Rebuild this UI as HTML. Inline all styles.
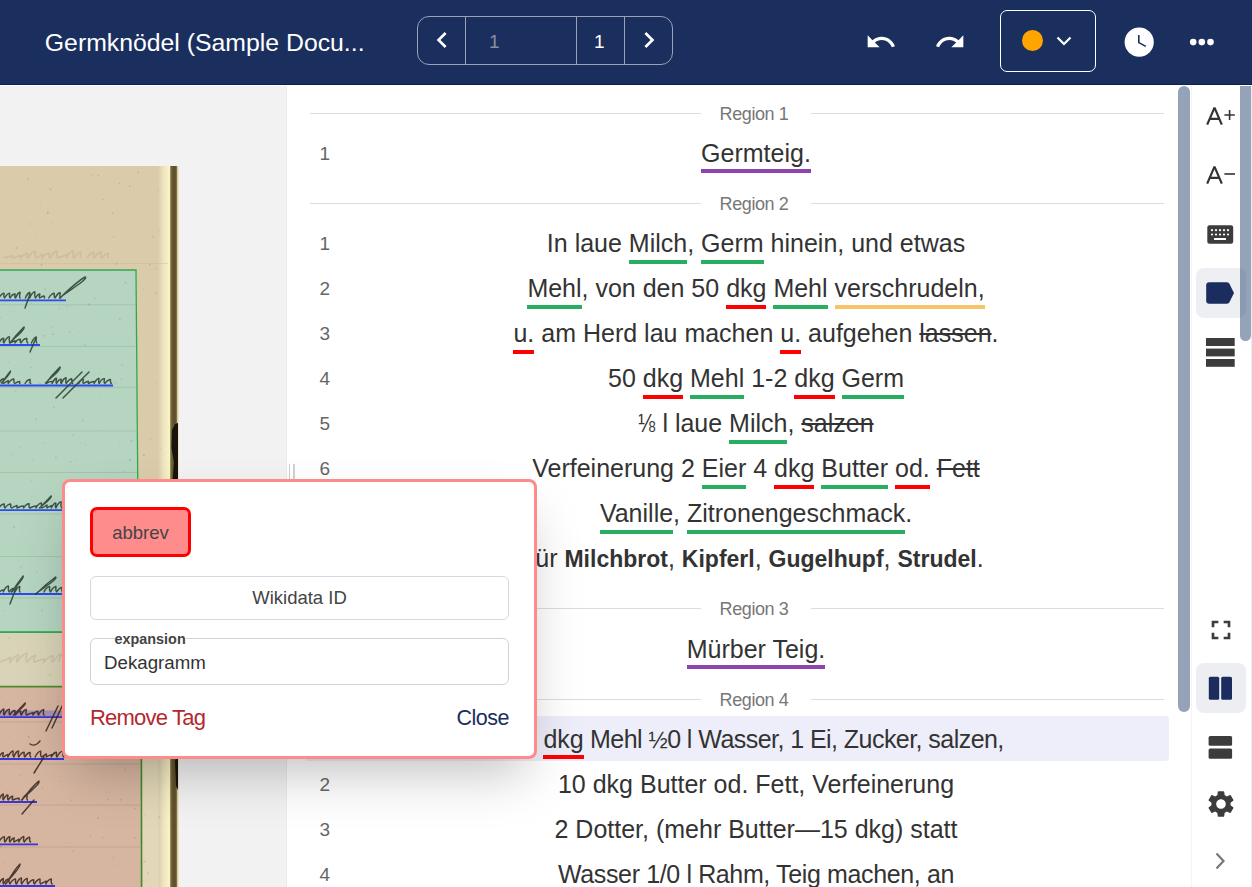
<!DOCTYPE html>
<html><head><meta charset="utf-8">
<style>
*{box-sizing:border-box;margin:0;padding:0}
html,body{width:1252px;height:887px;overflow:hidden;background:#fff;font-family:"Liberation Sans",sans-serif;color:#333}
.abs{position:absolute}
#hdr{left:0;top:0;width:1252px;height:85px;background:#1b2f5f;border-bottom:1px solid #0b2051}
#title{left:44.8px;top:25.6px;font-size:24.8px;color:#fff;white-space:nowrap;line-height:34px}
#pager{left:417px;top:16px;width:256px;height:49px;border:1px solid #9aa2b6;border-radius:12px}
.pdiv{top:0;width:1px;height:47px;background:#9aa2b6}
#imgpane{left:0;top:86px;width:287px;height:801px;background:#f2f2f2;overflow:hidden}
#txtpane{left:287px;top:86px;width:904px;height:801px;background:#fff;overflow:hidden}
.sep{height:1px;background:#dcdcdc}
.rlab{font-size:18px;letter-spacing:-0.4px;color:#777;white-space:nowrap;line-height:20px}
.ln{font-size:19px;color:#666;line-height:20px}
.tl{left:356px;width:800px;text-align:center;font-size:25px;line-height:30px;white-space:nowrap;color:#333}
.u{padding-bottom:6.4px;background-repeat:no-repeat;background-position:left bottom;background-size:100% 4px}
.g{background-image:linear-gradient(#27ae60,#27ae60)}
.r{background-image:linear-gradient(#f00,#f00)}
.y{background-image:linear-gradient(#f7c46c,#f7c46c)}
.p{background-image:linear-gradient(#8e44ad,#8e44ad)}
.s{text-decoration:line-through;text-decoration-thickness:2px}
b{font-weight:700;font-size:23px}
#sidebar{left:1191px;top:86px;width:61px;height:801px;background:#fff;border-left:1px solid #f4f4f4}
#popup{left:62px;top:479px;width:475px;height:280px;background:#fff;border:3px solid #ff8a8a;border-radius:8px;box-shadow:0 25px 50px -12px rgba(0,0,0,.25)}
</style></head><body>
<div id="hdr" class="abs"></div>
<div id="title" class="abs">Germknödel (Sample Docu...</div>
<div id="pager" class="abs">
  <div class="abs pdiv" style="left:47px"></div>
  <div class="abs pdiv" style="left:158px"></div>
  <div class="abs pdiv" style="left:206px"></div>
</div>

<div class="abs" style="left:489px;top:31px;font-size:19px;line-height:22px;color:#8a8f9e">1</div>
<div class="abs" style="left:594px;top:31px;font-size:19px;line-height:22px;color:#fff">1</div>
<svg class="abs" style="left:425.6px;top:24.3px" width="32" height="32" viewBox="0 0 24 24"><path fill="#fff" d="M15.41 7.41L14 6l-6 6 6 6 1.41-1.41L10.83 12z"/></svg>
<svg class="abs" style="left:632.5px;top:24.3px" width="32" height="32" viewBox="0 0 24 24"><path fill="#fff" d="M10 6L8.59 7.41 13.17 12l-4.58 4.59L10 18l6-6z"/></svg>
<svg class="abs" style="left:865.3px;top:26.4px" width="32" height="32" viewBox="0 0 24 24"><path fill="#fff" d="M12.5 8c-2.65 0-5.05.99-6.9 2.6L2 7v9h9l-3.62-3.62c1.39-1.16 3.16-1.88 5.12-1.88 3.54 0 6.55 2.31 7.6 5.5l2.37-.78C21.08 11.03 17.15 8 12.5 8z"/></svg>
<svg class="abs" style="left:934px;top:26.4px" width="32" height="32" viewBox="0 0 24 24"><path fill="#fff" d="M18.4 10.6C16.55 8.99 14.15 8 11.5 8c-4.65 0-8.58 3.03-9.96 7.22L3.9 16c1.050-3.19 4.05-5.5 7.6-5.5 1.95 0 3.73.72 5.12 1.88L13 16h9V7l-3.6 3.6z"/></svg>
<div class="abs" style="left:1000px;top:10px;width:96px;height:62px;border:1px solid #fff;border-radius:7px"></div>
<div class="abs" style="left:1021.8px;top:29.7px;width:21.4px;height:21.4px;border-radius:50%;background:#ffa500"></div>
<svg class="abs" style="left:1055px;top:34px" width="18" height="14" viewBox="0 0 18 14"><path d="M2.5 3.5 L9 10 L15.5 3.5" stroke="#fff" stroke-width="2.2" fill="none"/></svg>
<svg class="abs" style="left:1124px;top:27px" width="30" height="30" viewBox="0 0 30 30"><circle cx="15.2" cy="15.1" r="14.6" fill="#fff"/><path d="M14.8 8 V15.6 L21.8 19.4" stroke="#1b2f5f" stroke-width="1.6" fill="none"/></svg>
<svg class="abs" style="left:1186px;top:35px" width="32" height="14" viewBox="0 0 32 14"><circle cx="7.2" cy="7.1" r="3.3" fill="#fff"/><circle cx="15.8" cy="7.1" r="3.3" fill="#fff"/><circle cx="24.5" cy="7.1" r="3.3" fill="#fff"/></svg>
<div id="imgpane" class="abs"></div>
<svg class="abs" style="left:0;top:86px" width="287" height="801" viewBox="0 86 287 801">
<defs>
<linearGradient id="edge" x1="0" x2="1" y1="0" y2="0">
<stop offset="0" stop-color="#dacbab"/><stop offset="0.5" stop-color="#efe6c0"/><stop offset="1" stop-color="#faf4c8"/>
</linearGradient>
<linearGradient id="bind" x1="0" x2="1" y1="0" y2="0">
<stop offset="0" stop-color="#a89868"/><stop offset="0.22" stop-color="#67592f"/><stop offset="0.6" stop-color="#5a4c2b"/><stop offset="0.76" stop-color="#7d6e45"/><stop offset="0.86" stop-color="#d8c89e"/><stop offset="1" stop-color="#eadab0"/>
</linearGradient>
<linearGradient id="shade" x1="0" x2="1" y1="0" y2="0">
<stop offset="0" stop-color="#000" stop-opacity="0.05"/><stop offset="1" stop-color="#000" stop-opacity="0"/>
</linearGradient>
</defs>
<rect x="-5" y="166" width="170" height="730" fill="#dacbab"/>
<rect x="158" y="166" width="12" height="730" fill="url(#edge)"/>
<rect x="170" y="166" width="8.6" height="730" fill="url(#bind)"/>
<path d="M172 430 L175 424 L178 423 L178 482 L172.5 482 L174 462 L171.5 448 Z" fill="#17130c"/>
<path d="M175 760 L178 758 L178 790 L176 786 Z" fill="#17130c"/>
<g stroke="#c9bb9b" stroke-width="1" opacity="0.45">
<line x1="0" y1="263.5" x2="168" y2="263.5"/>
</g>
<polygon points="-5,270 136,270 139,632 -5,632" fill="#b5d5c1"/>
<polyline points="-5,270 136,270 139,632 -5,632" fill="none" stroke="#2daa50" stroke-width="1.3"/>
<g stroke="#a3c3ad" stroke-width="1">
<line x1="0" y1="304.8" x2="135" y2="304.8"/>
<line x1="0" y1="346.4" x2="136" y2="346.4"/>
<line x1="0" y1="387.3" x2="136" y2="387.3"/>
<line x1="0" y1="431" x2="137" y2="431"/>
<line x1="0" y1="472.5" x2="137" y2="472.5"/>
<line x1="0" y1="514" x2="138" y2="514"/>
<line x1="0" y1="556.6" x2="138" y2="556.6"/>
<line x1="0" y1="598" x2="138" y2="598"/>
</g>
<rect x="-5" y="633" width="145" height="53.5" fill="#d9d3b7"/>
<line x1="-5" y1="632.3" x2="139" y2="632.3" stroke="#2daa50" stroke-width="1.3"/>
<polygon points="-5,687 141,687 141.5,896 -5,896" fill="#d7b6a1"/>
<rect x="141.5" y="687" width="17" height="210" fill="#e2d7b8"/>
<line x1="-5" y1="686.6" x2="141" y2="686.6" stroke="#4b8d2e" stroke-width="1.6"/>
<line x1="141.3" y1="687" x2="141.6" y2="896" stroke="#3f8a2a" stroke-width="1.6"/>
<g stroke="#c4a48f" stroke-width="1">
<line x1="0" y1="722" x2="140" y2="722"/>
<line x1="0" y1="764" x2="140" y2="764"/>
<line x1="0" y1="805" x2="140" y2="805"/>
<line x1="0" y1="847" x2="140" y2="847"/>
</g>
<g fill="#6b5a3a"><circle cx="40.0" cy="558.8" r="0.66" opacity="0.18"/><circle cx="105.1" cy="214.2" r="0.41" opacity="0.22"/><circle cx="43.6" cy="335.7" r="1.10" opacity="0.16"/><circle cx="140.5" cy="510.0" r="0.85" opacity="0.11"/><circle cx="106.7" cy="792.0" r="0.77" opacity="0.21"/><circle cx="112.8" cy="213.1" r="0.93" opacity="0.18"/><circle cx="50.6" cy="189.3" r="1.01" opacity="0.16"/><circle cx="120.8" cy="799.7" r="0.90" opacity="0.24"/><circle cx="66.4" cy="743.7" r="0.71" opacity="0.24"/><circle cx="147.6" cy="237.2" r="0.50" opacity="0.12"/><circle cx="162.2" cy="481.0" r="0.84" opacity="0.13"/><circle cx="85.2" cy="444.8" r="0.65" opacity="0.18"/><circle cx="98.2" cy="818.0" r="0.88" opacity="0.24"/><circle cx="143.9" cy="880.5" r="0.87" opacity="0.11"/><circle cx="144.6" cy="861.5" r="1.03" opacity="0.18"/><circle cx="119.9" cy="319.0" r="0.98" opacity="0.18"/><circle cx="47.9" cy="212.7" r="1.00" opacity="0.25"/><circle cx="14.9" cy="743.4" r="0.69" opacity="0.11"/><circle cx="49.4" cy="720.5" r="1.01" opacity="0.09"/><circle cx="103.2" cy="199.4" r="0.90" opacity="0.14"/><circle cx="148.0" cy="873.1" r="0.75" opacity="0.25"/><circle cx="52.0" cy="222.4" r="0.82" opacity="0.09"/><circle cx="33.2" cy="460.7" r="0.83" opacity="0.11"/><circle cx="7.1" cy="791.8" r="0.62" opacity="0.24"/><circle cx="150.6" cy="439.0" r="0.72" opacity="0.17"/><circle cx="108.2" cy="595.9" r="0.79" opacity="0.19"/><circle cx="158.0" cy="532.1" r="0.70" opacity="0.20"/><circle cx="39.9" cy="383.8" r="1.08" opacity="0.17"/><circle cx="92.1" cy="175.2" r="0.69" opacity="0.18"/><circle cx="3.4" cy="610.4" r="0.84" opacity="0.09"/><circle cx="105.4" cy="502.7" r="0.88" opacity="0.14"/><circle cx="118.8" cy="698.4" r="0.42" opacity="0.09"/><circle cx="113.6" cy="860.6" r="0.58" opacity="0.16"/><circle cx="99.6" cy="397.4" r="0.65" opacity="0.13"/><circle cx="62.0" cy="595.8" r="0.61" opacity="0.14"/><circle cx="129.7" cy="186.4" r="0.80" opacity="0.20"/><circle cx="52.1" cy="327.2" r="0.96" opacity="0.12"/><circle cx="31.5" cy="480.4" r="0.89" opacity="0.10"/><circle cx="54.1" cy="407.3" r="0.98" opacity="0.15"/><circle cx="143.7" cy="288.9" r="0.64" opacity="0.19"/><circle cx="148.7" cy="491.8" r="0.56" opacity="0.10"/><circle cx="89.0" cy="304.4" r="0.96" opacity="0.22"/><circle cx="30.8" cy="367.6" r="0.97" opacity="0.19"/><circle cx="135.5" cy="415.6" r="0.49" opacity="0.13"/><circle cx="133.4" cy="362.2" r="0.64" opacity="0.15"/><circle cx="70.5" cy="461.9" r="1.04" opacity="0.11"/><circle cx="0.8" cy="846.2" r="1.02" opacity="0.25"/><circle cx="73.0" cy="851.1" r="1.05" opacity="0.12"/><circle cx="125.2" cy="769.4" r="0.86" opacity="0.17"/><circle cx="48.6" cy="412.6" r="0.56" opacity="0.09"/><circle cx="98.9" cy="373.6" r="0.97" opacity="0.09"/><circle cx="151.8" cy="666.5" r="1.05" opacity="0.23"/><circle cx="151.1" cy="582.4" r="0.41" opacity="0.21"/><circle cx="28.9" cy="382.9" r="0.86" opacity="0.17"/><circle cx="69.5" cy="843.1" r="0.83" opacity="0.14"/><circle cx="42.4" cy="787.4" r="0.73" opacity="0.21"/><circle cx="59.1" cy="309.1" r="0.77" opacity="0.22"/><circle cx="28.8" cy="737.0" r="1.05" opacity="0.22"/><circle cx="138.3" cy="172.4" r="0.84" opacity="0.23"/><circle cx="8.4" cy="362.4" r="0.59" opacity="0.17"/><circle cx="71.1" cy="507.5" r="0.94" opacity="0.08"/><circle cx="9.2" cy="258.3" r="0.49" opacity="0.09"/><circle cx="163.7" cy="782.2" r="0.46" opacity="0.17"/><circle cx="53.1" cy="393.5" r="0.65" opacity="0.19"/><circle cx="98.6" cy="426.8" r="0.53" opacity="0.14"/><circle cx="20.8" cy="567.0" r="0.90" opacity="0.14"/><circle cx="13.4" cy="295.6" r="0.66" opacity="0.18"/><circle cx="131.5" cy="440.8" r="0.96" opacity="0.19"/><circle cx="72.5" cy="435.1" r="0.75" opacity="0.20"/><circle cx="70.6" cy="666.8" r="0.72" opacity="0.12"/><circle cx="90.0" cy="667.5" r="0.45" opacity="0.15"/><circle cx="71.5" cy="800.4" r="1.06" opacity="0.14"/><circle cx="150.8" cy="736.5" r="0.58" opacity="0.16"/><circle cx="20.7" cy="752.5" r="0.86" opacity="0.23"/><circle cx="133.1" cy="647.6" r="0.91" opacity="0.18"/><circle cx="17.3" cy="590.2" r="0.40" opacity="0.10"/><circle cx="130.1" cy="198.9" r="0.46" opacity="0.10"/><circle cx="147.9" cy="296.0" r="0.42" opacity="0.22"/><circle cx="20.4" cy="774.6" r="0.87" opacity="0.22"/><circle cx="160.0" cy="583.9" r="0.96" opacity="0.09"/><circle cx="128.9" cy="535.2" r="0.90" opacity="0.10"/><circle cx="125.8" cy="839.9" r="0.44" opacity="0.14"/><circle cx="94.7" cy="763.2" r="0.57" opacity="0.11"/><circle cx="42.0" cy="610.5" r="0.93" opacity="0.15"/><circle cx="61.7" cy="452.6" r="0.65" opacity="0.15"/><circle cx="14.0" cy="527.2" r="1.08" opacity="0.15"/><circle cx="125.6" cy="282.6" r="0.88" opacity="0.21"/><circle cx="113.2" cy="539.3" r="0.74" opacity="0.19"/><circle cx="150.8" cy="274.5" r="0.47" opacity="0.21"/><circle cx="154.0" cy="539.4" r="0.71" opacity="0.20"/><circle cx="31.3" cy="359.5" r="0.54" opacity="0.18"/><circle cx="52.9" cy="334.3" r="0.88" opacity="0.24"/><circle cx="49.7" cy="674.8" r="0.69" opacity="0.23"/><circle cx="98.2" cy="359.4" r="0.55" opacity="0.08"/><circle cx="80.6" cy="442.6" r="0.52" opacity="0.14"/><circle cx="54.1" cy="724.4" r="0.50" opacity="0.25"/><circle cx="80.6" cy="598.3" r="0.73" opacity="0.22"/><circle cx="138.0" cy="568.1" r="0.74" opacity="0.20"/><circle cx="143.9" cy="455.2" r="0.91" opacity="0.24"/><circle cx="78.5" cy="332.3" r="0.56" opacity="0.20"/><circle cx="113.5" cy="857.3" r="1.00" opacity="0.12"/><circle cx="31.9" cy="353.2" r="0.53" opacity="0.20"/><circle cx="144.2" cy="814.8" r="0.58" opacity="0.23"/><circle cx="52.7" cy="471.8" r="0.91" opacity="0.09"/><circle cx="15.6" cy="767.4" r="0.60" opacity="0.14"/><circle cx="97.5" cy="653.4" r="0.40" opacity="0.14"/><circle cx="73.3" cy="516.8" r="0.55" opacity="0.18"/><circle cx="160.5" cy="448.5" r="0.78" opacity="0.10"/><circle cx="46.2" cy="646.1" r="0.48" opacity="0.23"/><circle cx="152.7" cy="236.8" r="1.06" opacity="0.14"/><circle cx="129.8" cy="712.3" r="0.61" opacity="0.19"/><circle cx="109.9" cy="747.4" r="0.59" opacity="0.21"/><circle cx="161.5" cy="651.4" r="0.78" opacity="0.10"/><circle cx="83.0" cy="420.6" r="0.90" opacity="0.20"/><circle cx="95.2" cy="298.0" r="0.85" opacity="0.19"/><circle cx="30.1" cy="807.7" r="0.86" opacity="0.10"/><circle cx="156.5" cy="268.8" r="0.63" opacity="0.20"/><circle cx="100.4" cy="566.5" r="0.85" opacity="0.16"/><circle cx="52.5" cy="294.0" r="0.45" opacity="0.20"/><circle cx="126.8" cy="558.1" r="0.92" opacity="0.14"/><circle cx="44.7" cy="443.0" r="1.01" opacity="0.09"/><circle cx="84.8" cy="345.0" r="0.94" opacity="0.14"/><circle cx="55.9" cy="457.4" r="0.78" opacity="0.21"/><circle cx="59.3" cy="776.8" r="0.48" opacity="0.13"/><circle cx="16.7" cy="248.1" r="0.95" opacity="0.20"/><circle cx="31.1" cy="303.2" r="0.69" opacity="0.21"/><circle cx="137.0" cy="706.1" r="0.81" opacity="0.10"/><circle cx="66.9" cy="306.4" r="0.77" opacity="0.18"/><circle cx="33.9" cy="347.1" r="0.95" opacity="0.09"/><circle cx="134.9" cy="808.7" r="1.06" opacity="0.15"/><circle cx="92.8" cy="586.8" r="0.84" opacity="0.25"/><circle cx="115.4" cy="382.6" r="1.00" opacity="0.16"/><circle cx="101.0" cy="690.3" r="0.40" opacity="0.21"/><circle cx="111.2" cy="521.1" r="0.77" opacity="0.16"/><circle cx="32.5" cy="548.3" r="0.43" opacity="0.17"/><circle cx="108.5" cy="486.8" r="0.80" opacity="0.24"/><circle cx="149.9" cy="264.6" r="0.95" opacity="0.19"/><circle cx="8.5" cy="426.1" r="0.56" opacity="0.09"/><circle cx="90.5" cy="836.5" r="0.63" opacity="0.23"/><circle cx="116.7" cy="263.7" r="1.00" opacity="0.18"/><circle cx="155.7" cy="682.5" r="0.92" opacity="0.14"/><circle cx="135.5" cy="837.9" r="1.00" opacity="0.15"/><circle cx="127.2" cy="516.2" r="0.48" opacity="0.09"/><circle cx="13.1" cy="311.2" r="0.51" opacity="0.16"/><circle cx="117.5" cy="554.0" r="0.70" opacity="0.19"/><circle cx="51.2" cy="501.4" r="0.93" opacity="0.15"/><circle cx="30.3" cy="814.6" r="0.90" opacity="0.14"/><circle cx="62.3" cy="548.1" r="0.82" opacity="0.12"/><circle cx="0.5" cy="317.5" r="0.95" opacity="0.10"/><circle cx="77.3" cy="307.6" r="0.55" opacity="0.11"/><circle cx="67.8" cy="288.2" r="0.42" opacity="0.10"/><circle cx="28.3" cy="520.0" r="0.44" opacity="0.08"/><circle cx="75.3" cy="460.6" r="0.89" opacity="0.09"/><circle cx="67.8" cy="452.6" r="0.42" opacity="0.24"/><circle cx="36.8" cy="234.9" r="0.73" opacity="0.11"/><circle cx="104.6" cy="416.4" r="0.49" opacity="0.09"/><circle cx="122.2" cy="365.1" r="0.95" opacity="0.16"/><circle cx="156.7" cy="383.4" r="0.57" opacity="0.13"/><circle cx="136.9" cy="620.0" r="0.64" opacity="0.10"/><circle cx="114.6" cy="864.9" r="0.81" opacity="0.08"/><circle cx="5.1" cy="232.2" r="0.52" opacity="0.09"/><circle cx="9.1" cy="638.1" r="1.03" opacity="0.11"/><circle cx="163.6" cy="510.4" r="0.96" opacity="0.24"/><circle cx="157.9" cy="191.6" r="0.61" opacity="0.18"/><circle cx="159.0" cy="230.2" r="0.61" opacity="0.22"/><circle cx="19.3" cy="447.7" r="0.63" opacity="0.20"/><circle cx="156.0" cy="292.7" r="0.92" opacity="0.20"/><circle cx="140.4" cy="565.4" r="1.05" opacity="0.14"/><circle cx="69.7" cy="332.2" r="0.95" opacity="0.16"/><circle cx="45.3" cy="289.2" r="0.90" opacity="0.18"/><circle cx="119.4" cy="445.5" r="0.74" opacity="0.11"/><circle cx="119.4" cy="183.5" r="0.73" opacity="0.21"/><circle cx="113.8" cy="236.9" r="0.57" opacity="0.22"/><circle cx="107.9" cy="799.5" r="1.01" opacity="0.16"/><circle cx="150.7" cy="694.7" r="0.63" opacity="0.14"/><circle cx="12.1" cy="454.5" r="1.07" opacity="0.10"/><circle cx="95.6" cy="246.3" r="0.46" opacity="0.19"/><circle cx="40.4" cy="202.2" r="0.51" opacity="0.19"/><circle cx="98.4" cy="175.4" r="0.56" opacity="0.24"/><circle cx="37.0" cy="572.0" r="0.69" opacity="0.21"/><circle cx="101.5" cy="734.8" r="0.77" opacity="0.11"/><circle cx="29.8" cy="224.0" r="0.98" opacity="0.10"/><circle cx="4.0" cy="862.8" r="0.54" opacity="0.23"/><circle cx="14.4" cy="502.0" r="0.56" opacity="0.22"/><circle cx="103.4" cy="629.1" r="0.93" opacity="0.23"/><circle cx="58.1" cy="601.2" r="0.71" opacity="0.10"/><circle cx="140.3" cy="595.0" r="0.97" opacity="0.12"/><circle cx="90.6" cy="501.2" r="0.91" opacity="0.09"/><circle cx="58.2" cy="515.9" r="0.45" opacity="0.17"/><circle cx="123.5" cy="471.5" r="0.85" opacity="0.18"/><circle cx="36.0" cy="419.4" r="1.10" opacity="0.14"/><circle cx="72.4" cy="227.6" r="0.55" opacity="0.11"/><circle cx="156.4" cy="690.0" r="1.01" opacity="0.25"/><circle cx="102.8" cy="837.6" r="0.78" opacity="0.15"/><circle cx="159.3" cy="817.2" r="1.06" opacity="0.16"/><circle cx="129.9" cy="460.0" r="1.10" opacity="0.24"/><circle cx="49.1" cy="839.6" r="0.53" opacity="0.10"/><circle cx="121.4" cy="378.9" r="0.76" opacity="0.19"/><circle cx="6.8" cy="703.5" r="0.59" opacity="0.15"/><circle cx="57.9" cy="701.3" r="0.92" opacity="0.13"/><circle cx="17.4" cy="382.5" r="0.69" opacity="0.09"/><circle cx="25.7" cy="716.2" r="0.89" opacity="0.25"/><circle cx="164.6" cy="797.8" r="0.66" opacity="0.11"/><circle cx="52.4" cy="500.5" r="0.77" opacity="0.17"/><circle cx="60.4" cy="780.9" r="0.60" opacity="0.16"/><circle cx="149.0" cy="748.1" r="0.61" opacity="0.12"/><circle cx="135.5" cy="174.2" r="0.49" opacity="0.17"/><circle cx="90.0" cy="286.3" r="0.44" opacity="0.11"/><circle cx="129.4" cy="502.3" r="1.09" opacity="0.21"/><circle cx="164.5" cy="192.3" r="0.53" opacity="0.08"/><circle cx="72.6" cy="410.6" r="0.44" opacity="0.17"/><circle cx="15.8" cy="391.4" r="0.57" opacity="0.22"/><circle cx="70.3" cy="354.5" r="0.43" opacity="0.15"/><circle cx="105.4" cy="653.2" r="1.04" opacity="0.22"/><circle cx="41.6" cy="264.7" r="0.93" opacity="0.21"/><circle cx="85.5" cy="765.3" r="0.79" opacity="0.13"/><circle cx="28.3" cy="179.3" r="0.85" opacity="0.23"/><circle cx="152.2" cy="503.6" r="0.87" opacity="0.24"/><circle cx="136.8" cy="600.9" r="0.69" opacity="0.17"/><circle cx="28.7" cy="298.7" r="0.88" opacity="0.25"/></g>
<rect x="-5" y="710.5" width="146" height="6.5" fill="#9b86b8" opacity="0.75"/>
<g stroke="#2b4cf0" stroke-width="1.8">
<line x1="-2" y1="300.4" x2="66" y2="300.4"/>
<line x1="-2" y1="345" x2="40" y2="345"/>
<line x1="-2" y1="385.5" x2="113" y2="385.5"/>
<line x1="-2" y1="510.1" x2="64" y2="510.1"/>
<line x1="-2" y1="594" x2="64" y2="594"/>
</g>
<g stroke="#3a36d8" stroke-width="1.8">
<line x1="-2" y1="717.2" x2="64" y2="717.2"/>
<line x1="-2" y1="759" x2="64" y2="759"/>
<line x1="-2" y1="802" x2="37" y2="802"/>
<line x1="-2" y1="844.4" x2="38" y2="844.4"/>
<line x1="-2" y1="886" x2="55" y2="886"/>
</g>
<g stroke="#2a3d32" stroke-width="1.45" fill="none" stroke-linecap="round" stroke-linejoin="round" opacity="0.85">
<path d="M-1.0 298.0 C0.3 295.1 2.9 293.2 4.0 293.2 C4.6 293.7 2.9 297.0 4.6 298.0 C5.9 295.1 8.5 293.1 9.6 293.1 C10.1 293.6 8.5 297.0 10.1 298.0 C11.4 295.5 13.9 293.9 15.0 293.9 C15.6 294.3 13.9 297.2 15.6 298.0 C16.9 294.6 19.1 292.3 20.0 292.3 C20.4 292.8 18.7 296.9 20.0 298.0 M25.4 298.0 C26.7 294.7 28.9 292.5 29.8 292.5 C30.2 293.1 28.4 296.9 29.7 298.0 C31.0 294.3 33.6 291.8 34.8 291.8 C35.4 292.4 33.8 296.8 35.5 298.0 C36.9 295.6 39.0 294.0 39.8 294.0 C40.3 294.4 38.5 297.2 39.7 298.0 C41.1 297.0 43.0 296.0 44.4 296.1 L44.4 298.0 M48.8 298.0 C50.1 295.1 52.9 293.2 54.2 293.2 C54.8 293.7 53.2 297.0 55.1 298.0 C56.5 294.8 59.0 292.7 60.1 292.7 C60.6 293.2 59.0 296.9 60.6 298.0 M60.0 298.0 C70.8 287.5 81.6 279.0 85.2 277.0 C88.8 279.0 67.2 291.7 59.5 298.0 M30.0 294.0 L25.0 308.0"/>
<path d="M-1.0 343.0 C0.3 340.1 2.7 338.2 3.6 338.2 C4.1 338.6 2.4 342.0 3.9 343.0 C5.2 339.2 8.0 336.7 9.3 336.7 C9.9 337.3 8.3 341.7 10.2 343.0 C11.7 342.0 13.6 341.0 15.0 340.8 L15.0 343.0 C16.3 340.7 19.0 339.2 20.3 339.2 C20.9 339.6 19.3 342.2 21.1 343.0 C22.5 340.2 25.3 338.4 26.7 338.4 C27.3 338.8 25.8 342.1 27.8 343.0 M31.4 343.0 C32.7 339.4 35.2 336.9 36.3 336.9 C36.8 337.5 35.2 341.8 36.8 343.0 M10.0 343.0 C16.0 335.0 22.0 329.0 24.0 327.0 C26.0 329.0 14.0 338.2 9.5 343.0 M36.0 338.0 L30.0 352.0"/>
<path d="M-1.0 383.5 C0.3 380.7 2.5 378.8 3.4 378.8 C3.8 379.3 2.0 382.6 3.3 383.5 C4.8 382.5 6.8 381.5 8.2 380.6 L8.2 383.5 C9.5 380.8 12.4 379.0 13.7 379.0 C14.4 379.5 12.9 382.6 14.9 383.5 C16.3 382.5 18.2 381.5 19.7 381.5 L19.7 383.5 M25.1 383.5 C26.4 381.1 29.0 379.4 30.1 379.4 C30.6 379.8 29.0 382.7 30.7 383.5 M2.0 383.0 C5.6 377.0 9.2 373.0 10.4 371.0 C11.6 373.0 4.4 379.4 1.5 383.0M46.0 383.5 C47.8 382.5 50.2 381.5 52.1 381.4 L52.1 383.5 C53.4 380.3 55.6 378.2 56.5 378.2 C56.9 378.7 55.2 382.4 56.5 383.5 C57.8 381.0 60.2 379.3 61.2 379.3 C61.6 379.7 59.9 382.7 61.4 383.5 C62.7 380.0 65.1 377.7 66.1 377.7 C66.6 378.3 64.9 382.3 66.3 383.5 C67.7 380.7 70.5 378.8 71.7 378.8 C72.4 379.3 70.8 382.6 72.7 383.5 M78.7 383.5 C80.0 381.0 82.3 379.3 83.3 379.3 C83.8 379.7 82.1 382.7 83.5 383.5 C85.0 382.5 87.0 381.5 88.4 381.3 L88.4 383.5 C90.2 382.5 92.4 381.5 94.1 381.6 L94.1 383.5 C95.4 380.4 97.9 378.3 98.9 378.3 C99.4 378.8 97.7 382.5 99.3 383.5 C100.6 380.6 103.1 378.6 104.3 378.6 C104.8 379.1 103.2 382.5 104.9 383.5 C106.2 381.1 109.1 379.5 110.4 379.5 C111.0 379.9 109.5 382.7 111.4 383.5 M46.0 383.0 C52.0 375.0 58.0 369.0 60.0 367.0 C62.0 369.0 50.0 378.2 45.5 383.0 M82.0 372.0 L56.0 398.0 M89.0 372.0 L63.0 398.0"/>
<path d="M-1.0 508.0 C0.3 505.5 3.0 503.9 4.2 503.9 C4.8 504.3 3.3 507.2 5.1 508.0 C6.4 505.5 9.3 503.9 10.6 503.9 C11.3 504.3 9.7 507.2 11.7 508.0 C13.3 507.0 15.4 506.0 17.0 505.4 L17.0 508.0 C19.0 507.0 21.6 506.0 23.6 506.1 L23.6 508.0 C25.0 505.4 27.7 503.7 29.0 503.7 C29.6 504.1 28.0 507.1 29.9 508.0 C31.7 507.0 34.2 506.0 36.0 506.0 L36.0 508.0 C37.3 504.9 40.1 502.9 41.4 502.9 C42.0 503.4 40.4 507.0 42.3 508.0 C43.7 507.0 45.6 506.0 47.0 505.0 L47.0 508.0 C48.3 507.0 50.1 506.0 51.3 505.6 L51.3 508.0 C52.7 504.9 54.9 502.9 55.8 502.9 C56.3 503.4 54.5 507.0 55.9 508.0 C57.2 504.3 59.8 501.8 61.0 501.8 C61.6 502.4 60.0 506.8 61.7 508.0 M40.0 508.0 C44.8 502.0 49.6 498.0 51.2 496.0 C52.8 498.0 43.2 504.4 39.5 508.0"/>
<path d="M-1.0 592.0 C0.3 591.0 2.0 590.0 3.3 590.0 L3.3 592.0 C4.6 588.4 7.2 585.9 8.4 585.9 C9.0 586.5 7.4 590.8 9.2 592.0 C10.6 589.8 13.2 588.3 14.3 588.3 C14.9 588.7 13.3 591.3 15.0 592.0 C16.4 588.7 18.7 586.4 19.7 586.4 C20.2 587.0 18.5 590.9 20.0 592.0 M24.7 592.0 M12.0 592.0 C16.8 584.0 21.6 578.0 23.2 576.0 C24.8 578.0 15.2 587.2 11.5 592.0 M16.0 588.0 L10.0 604.0 M36.0 594.0 C44.4 585.5 52.8 579.0 55.6 577.0 C58.4 579.0 41.6 588.9 35.5 594.0M44.0 592.0 C45.3 588.6 48.2 586.4 49.5 586.4 C50.1 587.0 48.6 590.9 50.5 592.0 C51.8 588.7 54.6 586.5 55.8 586.5 C56.4 587.1 54.9 590.9 56.7 592.0 C58.0 589.3 60.7 587.5 61.9 587.5 C62.5 587.9 60.9 591.1 62.7 592.0"/>
</g>
<g stroke="#35251d" stroke-width="1.45" fill="none" stroke-linecap="round" stroke-linejoin="round" opacity="0.85">
<path d="M-1.0 715.0 C0.3 711.4 2.8 709.0 3.8 709.0 C4.3 709.6 2.7 713.8 4.2 715.0 C5.6 711.4 8.1 709.1 9.3 709.1 C9.8 709.7 8.2 713.8 9.9 715.0 C11.2 712.2 13.8 710.4 14.9 710.4 C15.5 710.8 13.9 714.1 15.6 715.0 C16.9 712.7 19.5 711.2 20.7 711.2 C21.3 711.6 19.6 714.2 21.4 715.0 C22.7 711.7 25.1 709.4 26.2 709.4 C26.7 710.0 25.0 713.9 26.6 715.0 C28.5 714.0 31.0 713.0 32.9 712.6 L32.9 715.0 C34.2 712.8 36.8 711.3 38.0 711.3 C38.5 711.7 36.9 714.3 38.6 715.0 C39.9 711.7 42.5 709.5 43.6 709.5 C44.1 710.1 42.4 713.9 44.1 715.0 M14.0 715.0 C18.8 709.0 23.6 705.0 25.2 703.0 C26.8 705.0 17.2 711.4 13.5 715.0 M58.0 706.0 L46.0 731.0 M64.0 702.0 L52.0 728.0"/>
<path d="M-1.0 757.0 C0.3 754.4 2.5 752.7 3.3 752.7 C3.7 753.1 1.9 756.1 3.2 757.0 C4.6 756.0 6.5 755.0 7.9 754.3 L7.9 757.0 C9.2 753.4 11.8 751.0 13.0 751.0 C13.6 751.6 12.0 755.8 13.8 757.0 C15.1 753.4 17.5 751.0 18.5 751.0 C19.0 751.6 17.3 755.8 18.8 757.0 C20.1 754.1 22.8 752.2 24.1 752.2 C24.7 752.7 23.1 756.0 25.0 757.0 C26.3 754.2 28.9 752.4 30.1 752.4 C30.6 752.8 29.0 756.1 30.7 757.0 M35.2 757.0 C36.5 753.5 39.3 751.1 40.6 751.1 C41.2 751.7 39.6 755.8 41.5 757.0 C43.0 756.0 45.0 755.0 46.4 753.9 L46.4 757.0 C47.9 756.0 49.8 755.0 51.3 754.6 L51.3 757.0 C52.6 754.2 55.2 752.3 56.4 752.3 C57.0 752.8 55.4 756.1 57.1 757.0 C58.4 753.5 61.3 751.1 62.6 751.1 C63.3 751.7 61.8 755.8 63.8 757.0 M66.9 757.0 M30 744 C33 746 37 745 40 741 M44.0 757.0 L34.0 773.0"/>
<path d="M-1.0 800.0 C0.3 796.4 2.5 794.0 3.3 794.0 C3.8 794.6 2.0 798.8 3.3 800.0 C4.6 796.9 7.0 794.9 7.9 794.9 C8.4 795.4 6.7 799.0 8.2 800.0 C9.6 797.8 11.8 796.3 12.7 796.3 C13.1 796.7 11.4 799.3 12.7 800.0 C14.6 799.0 17.2 798.0 19.1 798.2 L19.1 800.0 M22.2 800.0 C23.5 796.8 26.0 794.7 27.1 794.7 C27.6 795.2 25.9 798.9 27.5 800.0 M22.0 800.0 C29.2 790.5 36.4 783.0 38.8 781.0 C41.2 783.0 26.8 794.3 21.5 800.0 M34.0 800.0 L22.0 814.0"/>
<path d="M-1.0 842.0 C0.3 838.8 3.1 836.6 4.3 836.6 C5.0 837.2 3.4 840.9 5.3 842.0 C6.6 838.7 8.9 836.6 9.8 836.6 C10.3 837.1 8.5 840.9 9.9 842.0 C11.3 839.6 13.4 837.9 14.2 837.9 C14.7 838.3 12.9 841.2 14.1 842.0 C15.5 841.0 17.4 840.0 18.8 839.2 L18.8 842.0 C20.1 838.7 22.6 836.5 23.7 836.5 C24.3 837.1 22.6 840.9 24.3 842.0 C25.6 839.2 28.3 837.3 29.6 837.3 C30.2 837.8 28.6 841.1 30.5 842.0 M36.3 842.0"/>
<path d="M-1.0 884.0 C0.3 880.7 2.5 878.4 3.4 878.4 C3.9 879.0 2.1 882.9 3.5 884.0 C4.8 880.8 7.7 878.7 9.0 878.7 C9.6 879.2 8.1 882.9 10.0 884.0 C11.3 880.9 14.2 878.9 15.4 878.9 C16.1 879.4 14.5 883.0 16.5 884.0 C17.8 880.3 20.3 877.9 21.4 877.9 C21.9 878.5 20.2 882.8 21.8 884.0 C23.2 880.7 25.9 878.5 27.2 878.5 C27.8 879.0 26.2 882.9 28.1 884.0 C29.4 881.5 32.3 879.8 33.6 879.8 C34.2 880.2 32.7 883.2 34.6 884.0 C35.9 881.0 38.7 879.0 39.9 879.0 C40.6 879.5 39.0 883.0 40.8 884.0 C42.4 883.0 44.4 882.0 45.9 881.0 L45.9 884.0 C47.2 880.9 50.0 878.9 51.2 878.9 C51.8 879.4 50.2 883.0 52.1 884.0 M57.5 884.0 M6.0 884.0 C12.0 874.0 18.0 866.0 20.0 864.0 C22.0 866.0 10.0 878.0 5.5 884.0"/>
</g>
<g stroke="#b3a88e" stroke-width="1.5" fill="none" opacity="0.4"><path d="M4.0 258.0 C6.5 257.0 9.9 256.0 12.4 255.8 L12.4 258.0 C14.9 257.0 18.2 256.0 20.8 255.4 L20.8 258.0 C22.6 255.2 26.0 253.3 27.5 253.3 C28.2 253.8 25.9 257.1 28.2 258.0 C30.0 253.9 33.6 251.2 35.2 251.2 C36.0 251.8 33.8 256.6 36.2 258.0 C37.9 257.0 40.3 256.0 42.1 254.4 L42.1 258.0 C43.9 254.9 47.5 252.9 49.2 252.9 C50.0 253.4 47.8 257.0 50.2 258.0 C52.0 253.9 55.5 251.1 57.0 251.1 C57.8 251.8 55.5 256.6 57.8 258.0 C60.4 257.0 63.9 256.0 66.5 254.6 L66.5 258.0 C68.3 253.6 71.8 250.7 73.3 250.7 C74.0 251.5 71.7 256.5 74.0 258.0 C75.8 254.5 79.2 252.1 80.7 252.1 C81.4 252.7 79.1 256.8 81.3 258.0 M87.2 258.0 C89.0 254.5 92.3 252.2 93.7 252.2 C94.4 252.8 92.1 256.8 94.2 258.0 C96.0 254.4 99.4 252.0 100.9 252.0 C101.6 252.6 99.4 256.8 101.6 258.0 C103.4 255.4 106.8 253.6 108.3 253.6 C109.1 254.0 106.8 257.1 109.1 258.0"/><path d="M0.0 662.0 C3.0 661.0 7.1 660.0 10.1 657.4 L10.1 662.0 C13.1 657.6 17.2 654.7 18.5 654.7 C19.2 655.4 14.9 660.5 17.0 662.0 C20.0 656.8 25.0 653.3 27.0 653.3 C28.0 654.2 24.0 660.3 27.0 662.0 C30.0 658.0 34.2 655.3 35.6 655.3 C36.3 656.0 32.0 660.7 34.2 662.0 C37.0 661.0 40.8 660.0 43.7 659.0 L43.7 662.0 C46.7 658.2 51.4 655.7 53.3 655.7 C54.2 656.3 50.1 660.7 52.8 662.0 C55.8 657.3 59.9 654.1 61.2 654.1 C61.9 654.9 57.6 660.4 59.7 662.0 M64.2 662.0 C67.2 658.2 71.3 655.6 72.8 655.6 C73.5 656.2 69.2 660.7 71.4 662.0 C74.4 657.7 78.7 654.8 80.3 654.8 C81.1 655.5 76.9 660.6 79.3 662.0 C81.4 661.0 84.2 660.0 86.3 658.2 L86.3 662.0 C89.3 657.2 94.0 654.0 95.8 654.0 C96.7 654.8 92.6 660.4 95.3 662.0 C98.2 661.0 102.2 660.0 105.1 658.1 L105.1 662.0 C108.1 656.8 113.1 653.3 115.1 653.3 C116.1 654.2 112.1 660.3 115.1 662.0 C118.1 656.5 122.3 652.9 123.7 652.9 C124.5 653.8 120.2 660.2 122.4 662.0 C125.4 658.4 129.6 656.1 131.1 656.1 C131.8 656.7 127.5 660.8 129.7 662.0 C132.7 658.5 137.7 656.2 139.6 656.2 C140.6 656.8 136.6 660.8 139.5 662.0"/></g>
</svg>

<div id="txtpane" class="abs"></div>
<div class="abs" style="left:286px;top:86px;width:1px;height:801px;background:#ebebeb"></div>
<div class="abs" style="left:288.5px;top:464px;width:1.5px;height:15px;background:#d0d0d0"></div><div class="abs" style="left:293px;top:464px;width:1.5px;height:15px;background:#d0d0d0"></div>
<div class="abs sep" style="left:310px;top:112.5px;width:391px"></div>
<div class="abs sep" style="left:811px;top:112.5px;width:353px"></div>
<div class="abs rlab" style="left:699px;width:110px;text-align:center;top:103.56px">Region 1</div>
<div class="abs ln" style="left:319.5px;top:143.92px">1</div>
<div class="abs tl" style="top:137.84px"><span class="u p">Germteig.</span></div>
<div class="abs sep" style="left:310px;top:202.5px;width:391px"></div>
<div class="abs sep" style="left:811px;top:202.5px;width:353px"></div>
<div class="abs rlab" style="left:699px;width:110px;text-align:center;top:193.56px">Region 2</div>
<div class="abs ln" style="left:319.5px;top:234.42px">1</div>
<div class="abs tl" style="top:228.34px">In laue <span class="u g">Milch</span>, <span class="u g">Germ</span> hinein, und etwas</div>
<div class="abs ln" style="left:319.5px;top:279.42px">2</div>
<div class="abs tl" style="top:273.34px"><span class="u g">Mehl</span>, von den 50 <span class="u r">dkg</span> <span class="u g">Mehl</span> <span class="u y">verschrudeln,</span></div>
<div class="abs ln" style="left:319.5px;top:324.42px">3</div>
<div class="abs tl" style="top:318.34px"><span class="u r">u.</span> am Herd lau machen <span class="u r">u.</span> aufgehen <span class="s">lassen</span>.</div>
<div class="abs ln" style="left:319.5px;top:369.42px">4</div>
<div class="abs tl" style="top:363.34px">50 <span class="u r">dkg</span> <span class="u g">Mehl</span> 1-2 <span class="u r">dkg</span> <span class="u g">Germ</span></div>
<div class="abs ln" style="left:319.5px;top:414.42px">5</div>
<div class="abs tl" style="top:408.34px"><span style="display:inline-block;transform:scaleX(0.82);margin:0 -1.9px">⅛</span> l laue <span class="u g">Milch</span>, <span class="s">salzen</span></div>
<div class="abs ln" style="left:319.5px;top:459.42px">6</div>
<div class="abs tl" style="top:453.34px">Verfeinerung 2 <span class="u g">Eier</span> 4 <span class="u r">dkg</span> <span class="u g">Butter</span> <span class="u r">od.</span> <span class="s">Fett</span></div>
<div class="abs ln" style="left:319.5px;top:504.42px">7</div>
<div class="abs tl" style="top:498.34px"><span class="u g">Vanille</span>, <span class="u g">Zitronengeschmack</span>.</div>
<div class="abs ln" style="left:319.5px;top:549.42px">8</div>
<div class="abs tl" style="top:543.34px">für <b>Milchbrot</b>, <b>Kipferl</b>, <b>Gugelhupf</b>, <b>Strudel</b>.</div>
<div class="abs sep" style="left:310px;top:607.9px;width:391px"></div>
<div class="abs sep" style="left:811px;top:607.9px;width:353px"></div>
<div class="abs rlab" style="left:699px;width:110px;text-align:center;top:598.96px">Region 3</div>
<div class="abs ln" style="left:319.5px;top:639.62px">1</div>
<div class="abs tl" style="top:633.54px"><span class="u p">Mürber Teig.</span></div>
<div class="abs sep" style="left:310px;top:698.8px;width:391px"></div>
<div class="abs sep" style="left:811px;top:698.8px;width:353px"></div>
<div class="abs rlab" style="left:699px;width:110px;text-align:center;top:689.86px">Region 4</div>
<div class="abs" style="left:305px;top:716px;width:864px;height:45px;background:#eeeefa;border-radius:4px"></div>
<div class="abs ln" style="left:319.5px;top:729.92px">1</div>
<div class="abs tl" style="top:723.84px;left:543.4px;width:auto;text-align:left;letter-spacing:-0.55px"><span class="u r" style="letter-spacing:0">dkg</span> Mehl <span style="font-size:23px">½</span>0 l Wasser, 1 Ei, Zucker, salzen,</div>
<div class="abs ln" style="left:319.5px;top:774.92px">2</div>
<div class="abs tl" style="top:768.84px">10 dkg Butter od. Fett, Verfeinerung</div>
<div class="abs ln" style="left:319.5px;top:819.92px">3</div>
<div class="abs tl" style="top:813.84px">2 Dotter, (mehr Butter—15 dkg) statt</div>
<div class="abs ln" style="left:319.5px;top:864.92px">4</div>
<div class="abs tl" style="top:858.84px;letter-spacing:-0.37px">Wasser 1/0 l Rahm, Teig machen, an</div>
<div id="sidebar" class="abs"></div>
<div class="abs" style="left:1178px;top:86px;width:12px;height:626px;background:#94a3b8;border-radius:6px"></div>
<div class="abs" style="left:1240px;top:86px;width:10.7px;height:255px;background:#94a3b8;border-radius:0 0 5.5px 5.5px"></div>
<div class="abs" style="left:1250.8px;top:86px;width:1.2px;height:801px;background:#ececec"></div>
<svg class="abs" style="left:1204px;top:104px" width="34" height="24" viewBox="0 0 34 24"><path d="M3.2 20.6 L10.5 3.6 L17.8 20.6 M5.6 14.9 H15.4" stroke="#333" stroke-width="2.2" fill="none" stroke-linejoin="bevel"/><path d="M20.4 11 H30.8 M25.6 5.9 V16.1" stroke="#333" stroke-width="1.6" fill="none"/></svg>
<svg class="abs" style="left:1204px;top:163px" width="34" height="24" viewBox="0 0 34 24"><path d="M3.2 20.6 L10.5 3.6 L17.8 20.6 M5.6 14.9 H15.4" stroke="#333" stroke-width="2.2" fill="none" stroke-linejoin="bevel"/><path d="M20.4 11 H31" stroke="#333" stroke-width="1.6" fill="none"/></svg>
<svg class="abs" style="left:1207px;top:225px" width="27" height="19" viewBox="0 0 27 19"><rect x="0.3" y="0.2" width="25.9" height="18.5" rx="2.2" fill="#3c3c3c"/>
<g fill="#fff"><circle cx="5" cy="5.2" r="1.1"/><circle cx="9" cy="5.2" r="1.1"/><circle cx="13" cy="5.2" r="1.1"/><circle cx="17" cy="5.2" r="1.1"/><circle cx="21" cy="5.2" r="1.1"/>
<circle cx="5" cy="9.5" r="1.1"/><circle cx="9" cy="9.5" r="1.1"/><circle cx="13" cy="9.5" r="1.1"/><circle cx="17" cy="9.5" r="1.1"/><circle cx="21" cy="9.5" r="1.1"/>
<rect x="7" y="13" width="12" height="2"/></g></svg>
<div class="abs" style="left:1196px;top:268px;width:50px;height:50px;background:rgba(30,45,90,0.08);border-radius:8px"></div>
<svg class="abs" style="left:1206px;top:282px" width="29" height="23" viewBox="0 0 29 23"><path d="M3.2 0.2 H20.5 Q22.2 0.2 23.3 1.6 L28 11 L23.3 20.4 Q22.2 21.8 20.5 21.8 H3.2 Q0.2 21.8 0.2 18.8 V3.2 Q0.2 0.2 3.2 0.2 Z" fill="#1b2d5e"/></svg>
<svg class="abs" style="left:1206px;top:337px" width="29" height="31" viewBox="0 0 29 31"><rect x="0" y="1" width="28.7" height="8" fill="#3c3c3c"/><rect x="0" y="11.6" width="28.7" height="7.8" fill="#3c3c3c"/><rect x="0" y="22" width="28.7" height="7.8" fill="#3c3c3c"/></svg>
<svg class="abs" style="left:1204.5px;top:614px" width="32" height="32" viewBox="0 0 24 24"><path fill="#3c3c3c" d="M7 14H5v5h5v-2H7v-3zm-2-4h2V7h3V5H5v5zm12 7h-3v2h5v-5h-2v3zM14 5v2h3v3h2V5h-5z"/></svg>
<div class="abs" style="left:1196px;top:663px;width:50px;height:50px;background:#eceef2;border-radius:8px"></div>
<svg class="abs" style="left:1208px;top:676px" width="25" height="25" viewBox="0 0 25 25"><rect x="0.8" y="0.7" width="10.4" height="23" rx="1.5" fill="#1b2d5e"/><rect x="13.2" y="0.7" width="10.8" height="23" rx="1.5" fill="#1b2d5e"/></svg>
<svg class="abs" style="left:1208px;top:735px" width="25" height="25" viewBox="0 0 25 25"><rect x="0.6" y="0.9" width="23.5" height="9.9" rx="1.5" fill="#3c3c3c"/><rect x="0.6" y="13.5" width="23.5" height="10.3" rx="1.5" fill="#3c3c3c"/></svg>
<svg class="abs" style="left:1205px;top:788px" width="32" height="32" viewBox="0 0 24 24"><path fill="#3c3c3c" d="M19.14 12.94c.04-.3.06-.61.06-.94 0-.32-.02-.64-.07-.94l2.03-1.58c.18-.14.23-.41.12-.61l-1.92-3.32c-.12-.22-.37-.29-.59-.22l-2.39.96c-.5-.38-1.03-.7-1.62-.94l-.36-2.54c-.04-.24-.24-.41-.48-.41h-3.84c-.24 0-.43.17-.47.41l-.36 2.54c-.59.24-1.13.57-1.62.94l-2.39-.96c-.22-.08-.47 0-.59.22L2.74 8.87c-.12.21-.08.47.12.61l2.03 1.58c-.05.3-.09.63-.09.94s.02.64.07.94l-2.03 1.58c-.18.14-.23.41-.12.61l1.92 3.32c.12.22.37.29.59.22l2.39-.96c.5.38 1.03.7 1.62.94l.36 2.54c.05.24.24.41.48.41h3.84c.24 0 .44-.17.47-.41l.36-2.54c.59-.24 1.13-.56 1.62-.94l2.39.96c.22.08.47 0 .59-.22l1.92-3.32c.12-.22.07-.47-.12-.61l-2.01-1.58zM12 15.6c-1.98 0-3.6-1.62-3.6-3.6s1.62-3.6 3.6-3.6 3.6 1.62 3.6 3.6-1.62 3.6-3.6 3.6z"/></svg>
<svg class="abs" style="left:1212px;top:850px" width="16" height="22" viewBox="0 0 16 22"><path d="M4.5 3.5 L11.5 11 L4.5 18.5" stroke="#777" stroke-width="2.2" fill="none"/></svg>
<div id="popup" class="abs"></div>
<div class="abs" style="left:90px;top:507px;width:101px;height:50px;border:3px solid #f00;border-radius:7px;background:#ff8c8c;text-align:center;font-size:18.5px;line-height:46px;color:#444">abbrev</div>
<div class="abs" style="left:90px;top:576px;width:419px;height:44px;border:1px solid #d5d8e0;border-radius:6px;text-align:center;font-size:18.5px;line-height:42px;color:#444">Wikidata ID</div>
<div class="abs" style="left:90px;top:638px;width:419px;height:47px;border:1px solid #cfd3dc;border-radius:6px"></div>
<div class="abs" style="left:114.5px;top:630px;padding:0;background:#fff;font-size:14.4px;font-weight:700;line-height:18px;color:#444">expansion</div>
<div class="abs" style="left:104px;top:652px;font-size:18.7px;line-height:22px;color:#333">Dekagramm</div>
<div class="abs" style="left:90px;top:704.5px;font-size:22px;letter-spacing:-0.8px;line-height:26px;color:#b3282e">Remove Tag</div>
<div class="abs" style="left:409px;width:100px;text-align:right;top:704.5px;font-size:21.5px;letter-spacing:-0.5px;line-height:26px;color:#1b2d5e">Close</div>
</body></html>
